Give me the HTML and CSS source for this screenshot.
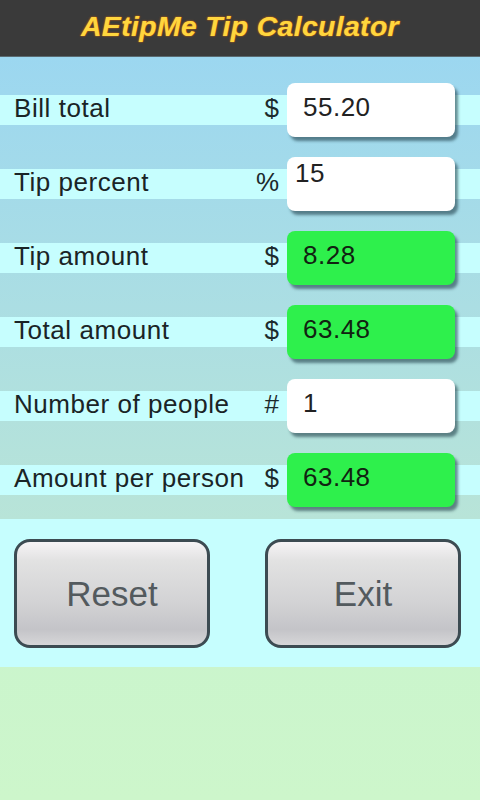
FILE: index.html
```html
<!DOCTYPE html>
<html lang="en">
<head>
    <meta charset="UTF-8">
    <meta name="viewport" content="width=device-width, initial-scale=1.0">
    <title>AEtipMe Tip Calculator</title>
    <link rel="stylesheet" href="styles.css">
</head>
<body>
    <header class="title-bar">
        <h1>AEtipMe Tip Calculator</h1>
    </header>

    <main class="calc">
        <div class="rows">
            <div class="row">
                <span class="label">Bill total</span>
                <span class="unit">$</span>
                <div class="field">55.20</div>
            </div>
            <div class="row">
                <span class="label">Tip percent</span>
                <span class="unit">%</span>
                <div class="field field-top">15</div>
            </div>
            <div class="row">
                <span class="label">Tip amount</span>
                <span class="unit">$</span>
                <div class="field result">8.28</div>
            </div>
            <div class="row">
                <span class="label">Total amount</span>
                <span class="unit">$</span>
                <div class="field result">63.48</div>
            </div>
            <div class="row">
                <span class="label">Number of people</span>
                <span class="unit">#</span>
                <div class="field">1</div>
            </div>
            <div class="row">
                <span class="label">Amount per person</span>
                <span class="unit">$</span>
                <div class="field result">63.48</div>
            </div>
        </div>

        <div class="actions">
            <button type="button" class="btn">Reset</button>
            <button type="button" class="btn">Exit</button>
        </div>
    </main>
</body>
</html>
```

FILE: styles.css
```css
    * {
        margin: 0;
        padding: 0;
        box-sizing: border-box;
        font-family: "Liberation Sans", Arial, sans-serif;
    }

    html, body {
        height: 100%;
    }

    body {
        display: flex;
        flex-direction: column;
        background: linear-gradient(to bottom, #c0f0d4, #cdf6cb);
    }

    .title-bar {
        height: 57px;
        background: #3a3a3a;
        border-bottom: 1px solid #5a6a70;
        display: flex;
        justify-content: center;
        align-items: center;
    }

    .title-bar h1 {
        font-size: 28.5px;
        font-weight: bold;
        font-style: italic;
        color: #ffd63e;
        letter-spacing: 0.3px;
        text-shadow: 0 0 2px #d06a10, 0 0 1px #b05000;
        margin-bottom: 4px;
    }

    .calc {
        display: flex;
        flex-direction: column;
    }

    .rows {
        padding-top: 18px;
        background: linear-gradient(to bottom, #9cd7f0, #b8e4d8);
    }

    .row {
        height: 74px;
        display: flex;
        align-items: flex-start;
        padding-left: 14px;
        background-image: linear-gradient(to bottom,
            transparent 20px, #c6fefe 20px, #c6fefe 50px, transparent 50px);
    }

    .label {
        flex: 1;
        font-size: 26px;
        letter-spacing: 0.55px;
        line-height: 30px;
        margin-top: 18px;
        color: #1a2426;
        white-space: nowrap;
    }

    .unit {
        font-size: 26px;
        line-height: 30px;
        margin-top: 18px;
        color: #1c2a2c;
        text-align: right;
    }

    .field {
        width: 168px;
        height: 54px;
        margin: 8px 25px 0 8px;
        padding-left: 16px;
        background: #ffffff;
        border-radius: 8px;
        box-shadow: 3px 4px 3px rgba(20, 50, 60, 0.55);
        font-size: 26px;
        letter-spacing: 0.5px;
        line-height: 48px;
        color: #222;
    }

    .field-top {
        padding-left: 8px;
        line-height: 32px;
    }

    .result {
        background: #2ef04c;
        color: #112211;
    }

    .actions {
        display: flex;
        justify-content: space-between;
        padding: 20px 19px 19px 14px;
        background: #c6fefe;
    }

    .btn {
        width: 196px;
        height: 109px;
        border: 3px solid #3c4b52;
        border-radius: 16px;
        background: linear-gradient(to bottom, #f6f4f6 0%, #e2e2e2 18%, #d2d2d4 60%, #c4c4c8 85%, #d6d6d8 100%);
        color: #535a5e;
        font-size: 35px;
        cursor: pointer;
    }
```
